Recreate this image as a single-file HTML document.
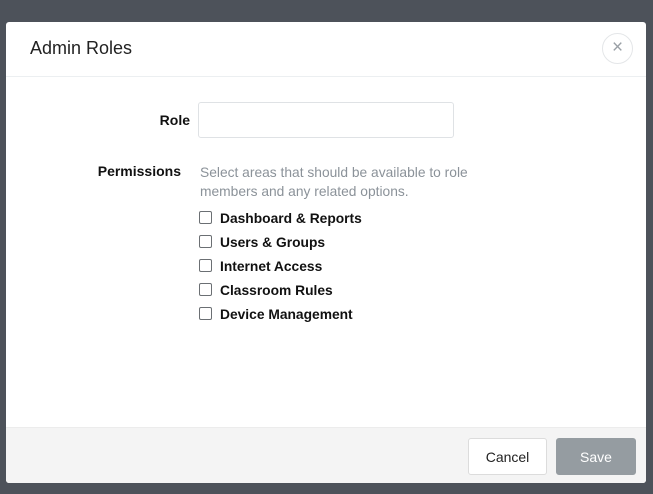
<!DOCTYPE html>
<html><head><style>
body{margin:0;width:653px;height:494px;background:#4d525a;font-family:"Liberation Sans",sans-serif;position:relative;overflow:hidden}
.m{position:absolute;left:6px;top:22px;width:640px;height:461px;background:#fff;border-radius:3px;overflow:hidden}
.h{height:54px;border-bottom:1px solid #eceff1;position:relative}
.h span{position:absolute;left:24px;top:16px;font-size:18px;color:#222}
.x{position:absolute;left:596px;top:11px;width:29px;height:29px;border:1px solid #e4e6e8;border-radius:50%;color:#9aa0a6;font-size:19px;text-align:center;line-height:28px}
.lbl{position:absolute;font-weight:bold;font-size:14px;color:#111;text-align:right}
.in{position:absolute;left:192px;top:80px;width:254px;height:34px;border:1px solid #dfe2e5;border-radius:3px}
.help{position:absolute;left:194px;top:141px;font-size:13.8px;color:#8b9299;line-height:19px}
.cb{position:absolute;left:193px;font-size:13.8px;font-weight:bold;color:#111}
.cb i{display:inline-block;width:11px;height:11px;border:1px solid #6b6f73;border-radius:2px;vertical-align:-1px;margin-right:8px}
.f{position:absolute;left:0;top:405px;width:640px;height:56px;background:#f4f4f4;border-top:1px solid #ececec}
.b{position:absolute;top:10px;height:35px;border-radius:3px;font-size:14px;text-align:center;line-height:36px}
</style></head><body>
<div class="m">
<div class="h"><span>Admin Roles</span><div class="x">×</div></div>
<div class="lbl" style="left:130px;top:90px;width:54px">Role</div>
<div class="in"></div>
<div class="lbl" style="left:60px;top:141px;width:115px">Permissions</div>
<div class="help">Select areas that should be available to role<br>members and any related options.</div>
<div class="cb" style="top:189px"><i></i>Dashboard &amp; Reports</div>
<div class="cb" style="top:213px"><i></i>Users &amp; Groups</div>
<div class="cb" style="top:237px"><i></i>Internet Access</div>
<div class="cb" style="top:261px"><i></i>Classroom Rules</div>
<div class="cb" style="top:285px"><i></i>Device Management</div>
<div class="f">
<div class="b" style="left:462px;width:77px;background:#fff;border:1px solid #dcdcdc;color:#222">Cancel</div>
<div class="b" style="left:550px;width:78px;background:#959ca1;color:#fff;border:1px solid #959ca1">Save</div>
</div>
</div>
</body></html>
